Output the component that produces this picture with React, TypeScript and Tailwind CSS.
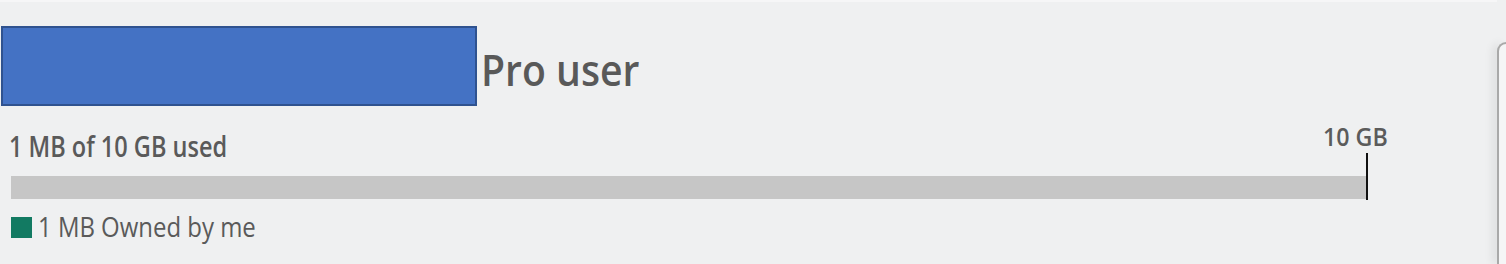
import React from "react";

export default function App() {
  const font = { fontFamily: '"Open Sans", "Noto Sans", sans-serif' };
  return (
    <div className="w-[1506px] h-[264px] bg-[#eff0f1] flex overflow-hidden" style={font}>
      <div className="flex-1 flex flex-col">
        <div className="h-[2px] bg-[#f6f6f7]" />
        <div className="flex items-start mt-[24px]">
          <div className="ml-[1px] w-[476px] h-[80px] bg-[#4472c4] border-2 border-[#2f528f]" />
          <div className="ml-[4px] mt-[21px] text-[44px] leading-none font-semibold text-[#595959] origin-left scale-x-[0.89] whitespace-nowrap">
            Pro user
          </div>
        </div>
        <div className="pl-[11px] flex flex-col">
          <div className="w-[1377px] flex justify-between items-start">
            <div className="-ml-[2px] mt-[33px] text-[28px] leading-[14px] font-semibold text-[#5a5a5a] origin-left scale-x-[0.84] whitespace-nowrap">
              1 MB of 10 GB used
            </div>
            <div className="mt-[23px] text-[25px] leading-[14px] font-semibold text-[#5b5b5b] origin-right scale-x-[0.93] whitespace-nowrap">
              10 GB
            </div>
          </div>
          <div className="flex items-end h-[47px]">
            <div className="w-[1355px] h-[23px] mb-[1px] bg-[#c6c6c6]" />
            <div className="w-[2px] h-[47px] bg-[#111111]" />
          </div>
          <div className="flex items-start mt-[12px]">
            <div className="mt-[5px] w-[21px] h-[21px] bg-[#127a62]" />
            <div className="ml-[6px] text-[28px] leading-none text-[#5a5a5a] origin-left scale-x-[0.855] whitespace-nowrap">
              1 MB Owned by me
            </div>
          </div>
        </div>
      </div>
      <div className="w-[9px] pt-[42px] flex flex-col">
        <div className="flex-1 border-l-2 border-t-2 border-[#a9a9a9] rounded-tl-[12px] bg-[#f5f5f6] shadow-[-5px_0_8px_rgba(0,0,0,0.07)]" />
      </div>
    </div>
  );
}
